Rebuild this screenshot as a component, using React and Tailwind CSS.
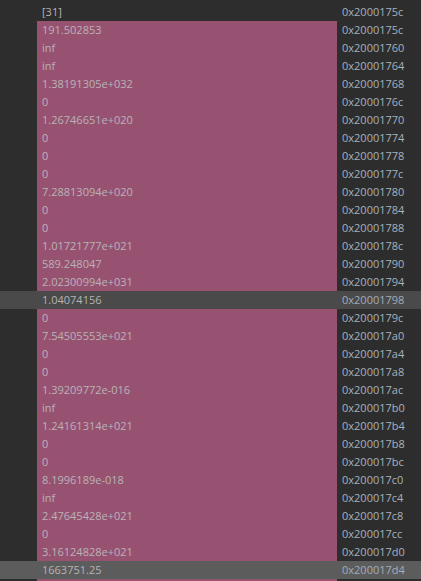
import React from "react";

const rows = [
  ["[31]", "0x2000175c", "head"],
  ["191.502853", "0x2000175c"],
  ["inf", "0x20001760"],
  ["inf", "0x20001764"],
  ["1.38191305e+032", "0x20001768"],
  ["0", "0x2000176c"],
  ["1.26746651e+020", "0x20001770"],
  ["0", "0x20001774"],
  ["0", "0x20001778"],
  ["0", "0x2000177c"],
  ["7.28813094e+020", "0x20001780"],
  ["0", "0x20001784"],
  ["0", "0x20001788"],
  ["1.01721777e+021", "0x2000178c"],
  ["589.248047", "0x20001790"],
  ["2.02300994e+031", "0x20001794"],
  ["1.04074156", "0x20001798", "sel"],
  ["0", "0x2000179c"],
  ["7.54505553e+021", "0x200017a0"],
  ["0", "0x200017a4"],
  ["0", "0x200017a8"],
  ["1.39209772e-016", "0x200017ac"],
  ["inf", "0x200017b0"],
  ["1.24161314e+021", "0x200017b4"],
  ["0", "0x200017b8"],
  ["0", "0x200017bc"],
  ["8.1996189e-018", "0x200017c0"],
  ["inf", "0x200017c4"],
  ["2.47645428e+021", "0x200017c8"],
  ["0", "0x200017cc"],
  ["3.16124828e+021", "0x200017d0"],
  ["1663751.25", "0x200017d4", "cur"],
];

function Row({ value, addr, kind }) {
  if (kind === "sel" || kind === "cur") {
    const bg = kind === "sel" ? "bg-[#4a4a4a]" : "bg-[#5c5c5c]";
    return (
      <div className={`flex h-[18px] items-center ${bg}`}>
        <div className="w-[37px] shrink-0" />
        <div className="w-[300px] shrink-0 pl-[5px] text-[#b4b4b4]">{value}</div>
        <div className="flex-1 pl-[5px] text-[#a3acb8]">{addr}</div>
      </div>
    );
  }
  return (
    <div className="flex h-[18px] items-stretch">
      <div className="w-[37px] shrink-0" />
      <div
        className={`flex w-[300px] shrink-0 items-center pl-[5px] text-[#b9b2b6] ${
          kind === "head" ? "" : "bg-[#975272]"
        }`}
      >
        {value}
      </div>
      <div className="flex flex-1 items-center pl-[5px] text-[#a6b1be]">{addr}</div>
    </div>
  );
}

export default function App() {
  return (
    <div
      className="h-[581px] w-[421px] overflow-hidden bg-[#2d2d2d] pt-[3px] text-[11px] leading-[18px]"
      style={{ fontFamily: '"Open Sans", "Noto Sans", sans-serif' }}
    >
      {rows.map(([v, a, k], i) => (
        <Row key={i} value={v} addr={a} kind={k} />
      ))}
      <div className="flex h-[18px]">
        <div className="w-[37px] shrink-0" />
        <div className="w-[300px] shrink-0 bg-[#975272]" />
      </div>
    </div>
  );
}
